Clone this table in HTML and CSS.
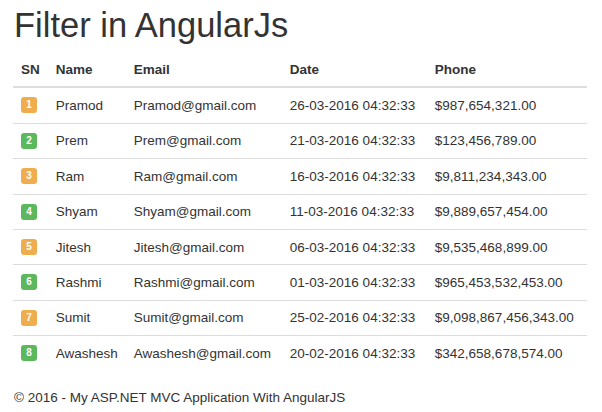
FILE: index.html
```html
<!DOCTYPE html>
<html>
<head>
<meta charset="utf-8">
<link rel="stylesheet" href="styles.css">
</head>
<body>
<div class="container">
  <h1 class="title">Filter in AngularJs</h1>
  <table class="table">
    <thead>
      <tr><th class="c-sn">SN</th><th class="c-name">Name</th><th class="c-email">Email</th><th class="c-date">Date</th><th>Phone</th></tr>
    </thead>
    <tbody>
      <tr><td><span class="lbl warn">1</span></td><td>Pramod</td><td>Pramod@gmail.com</td><td>26-03-2016 04:32:33</td><td>$987,654,321.00</td></tr>
      <tr><td><span class="lbl ok">2</span></td><td>Prem</td><td>Prem@gmail.com</td><td>21-03-2016 04:32:33</td><td>$123,456,789.00</td></tr>
      <tr><td><span class="lbl warn">3</span></td><td>Ram</td><td>Ram@gmail.com</td><td>16-03-2016 04:32:33</td><td>$9,811,234,343.00</td></tr>
      <tr><td><span class="lbl ok">4</span></td><td>Shyam</td><td>Shyam@gmail.com</td><td>11-03-2016 04:32:33</td><td>$9,889,657,454.00</td></tr>
      <tr><td><span class="lbl warn">5</span></td><td>Jitesh</td><td>Jitesh@gmail.com</td><td>06-03-2016 04:32:33</td><td>$9,535,468,899.00</td></tr>
      <tr><td><span class="lbl ok">6</span></td><td>Rashmi</td><td>Rashmi@gmail.com</td><td>01-03-2016 04:32:33</td><td>$965,453,532,453.00</td></tr>
      <tr><td><span class="lbl warn">7</span></td><td>Sumit</td><td>Sumit@gmail.com</td><td>25-02-2016 04:32:33</td><td>$9,098,867,456,343.00</td></tr>
      <tr><td><span class="lbl ok">8</span></td><td>Awashesh</td><td>Awashesh@gmail.com</td><td>20-02-2016 04:32:33</td><td>$342,658,678,574.00</td></tr>
    </tbody>
  </table>
  <footer class="footer">© 2016 - My ASP.NET MVC Application With AngularJS</footer>
</div>
</body>
</html>
```
FILE: styles.css
```css
html, body {
  margin: 0;
  padding: 0;
  background: #fff;
}
body {
  font-family: "Liberation Sans", Arial, sans-serif;
  font-size: 13.5px;
  line-height: 19.4px;
  color: #333;
}
.container {
  padding: 0 15px 0 13px;
}
.title {
  font-size: 34.5px;
  font-weight: 400;
  line-height: 38px;
  margin: 6px 0 8px 1px;
}
.table {
  width: 100%;
  border-collapse: collapse;
  border-spacing: 0;
}
.table th,
.table td {
  text-align: left;
  padding: 7.5px 8px;
  vertical-align: middle;
  white-space: nowrap;
}
.table th {
  font-weight: 700;
  border-bottom: 2px solid #ddd;
}
.table td {
  border-top: 1px solid #ddd;
}
.table tbody tr:first-child td {
  border-top: 0;
}
.c-sn { width: 17px; }
.c-name { width: 62px; }
.c-email { width: 140px; }
.c-date { width: 129px; }
.lbl {
  display: inline-block;
  width: 16px;
  height: 16px;
  border-radius: 3px;
  color: #fff;
  font-size: 10px;
  font-weight: 700;
  line-height: 16px;
  text-align: center;
  vertical-align: middle;
  margin-top: -2px;
}
.warn { background: #f0ad4e; }
.ok { background: #5cb85c; }
.footer {
  margin-top: 17px;
  padding-left: 1px;
}
```
